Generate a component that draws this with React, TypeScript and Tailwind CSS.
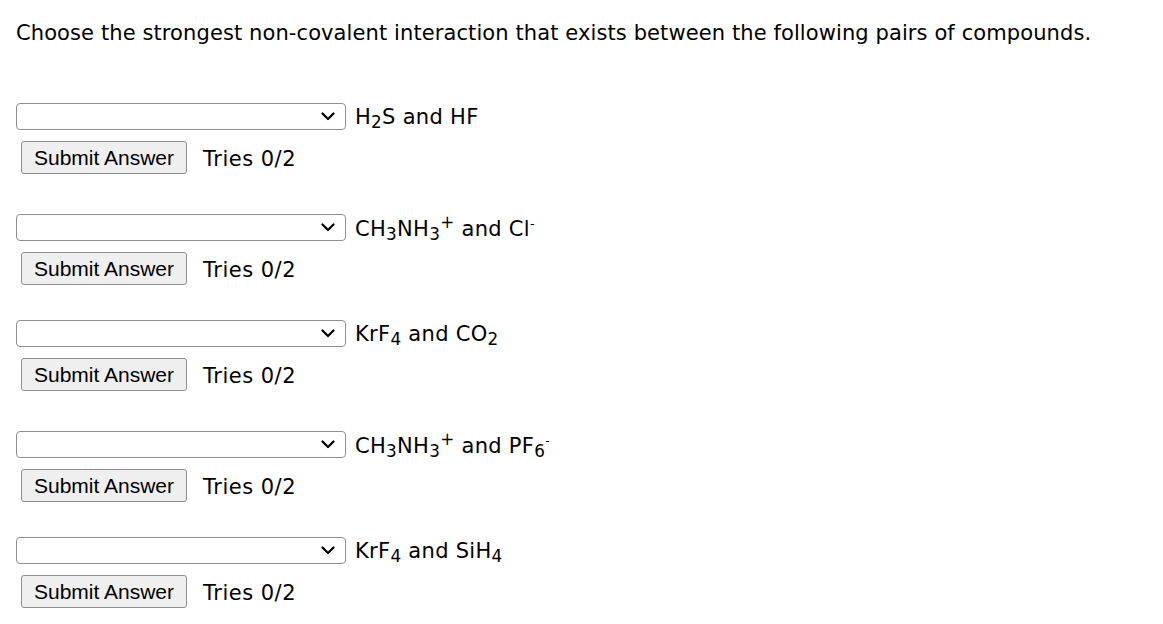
import React from 'react';

const FONT = { fontFamily: 'Verdana, "DejaVu Sans", sans-serif' };

type Item = { id: number; label: React.ReactNode; tall: boolean };

const Sub = ({ children }: { children: React.ReactNode }) => (
  <span className="align-[-4px] text-[0.8em] leading-none">{children}</span>
);
const Sup = ({ children, small }: { children: React.ReactNode; small?: boolean }) => (
  <span className={`align-[8px] leading-none ${small ? 'text-[0.6em]' : 'text-[0.8em]'}`}>{children}</span>
);

const items: Item[] = [
  { id: 1, tall: false, label: <>H<Sub>2</Sub>S and HF</> },
  { id: 2, tall: true, label: <>CH<Sub>3</Sub>NH<Sub>3</Sub><Sup>+</Sup> and Cl<Sup small>-</Sup></> },
  { id: 3, tall: false, label: <>KrF<Sub>4</Sub> and CO<Sub>2</Sub></> },
  { id: 4, tall: true, label: <>CH<Sub>3</Sub>NH<Sub>3</Sub><Sup>+</Sup> and PF<Sub>6</Sub><Sup small>-</Sup></> },
  { id: 5, tall: false, label: <>KrF<Sub>4</Sub> and SiH<Sub>4</Sub></> },
];

function Question({ item, first }: { item: Item; first: boolean }) {
  const mt = first ? 'mt-0' : item.tall ? 'mt-[40px]' : 'mt-[35px]';
  return (
    <div className={`flex flex-col gap-[11px] ${mt}`}>
      <div className="flex h-[27px] items-center gap-[9px]">
        <div className="flex h-[27px] w-[330px] items-center justify-end rounded-[4px] border border-[#8f8f8f] bg-white pr-[10px]">
          <svg width="14" height="9" viewBox="0 0 14 9" fill="none">
            <path d="M1.5 1.5l5.5 5.5 5.5-5.5" stroke="#000" strokeWidth="2.2" strokeLinecap="round" strokeLinejoin="round" />
          </svg>
        </div>
        <span className="pt-[2px] text-[21px] leading-[27px] tracking-[0.3px] text-black whitespace-nowrap">{item.label}</span>
      </div>
      <div className="flex h-[33px] items-center gap-[16px] pl-[5px]">
        <button
          className="h-[33px] w-[166px] rounded-[3px] border border-[#8f8f8f] bg-[#efefef] text-[21px] text-black"
          style={{ fontFamily: '"Liberation Sans", Arial, sans-serif' }}
        >
          Submit Answer
        </button>
        <span className="pt-[4px] text-[21px] tracking-[0.5px] text-black">Tries 0/2</span>
      </div>
    </div>
  );
}

export default function App() {
  return (
    <div className="min-h-[624px] w-[1163px] bg-white pl-4 pt-[21px]" style={FONT}>
      <p className="text-[21px] leading-[24px] tracking-[0.1px] text-black whitespace-nowrap">
        Choose the strongest non-covalent interaction that exists between the following pairs of compounds.
      </p>
      <div className="mt-[58px] flex flex-col">
        {items.map((item, i) => (
          <Question key={item.id} item={item} first={i === 0} />
        ))}
      </div>
    </div>
  );
}
